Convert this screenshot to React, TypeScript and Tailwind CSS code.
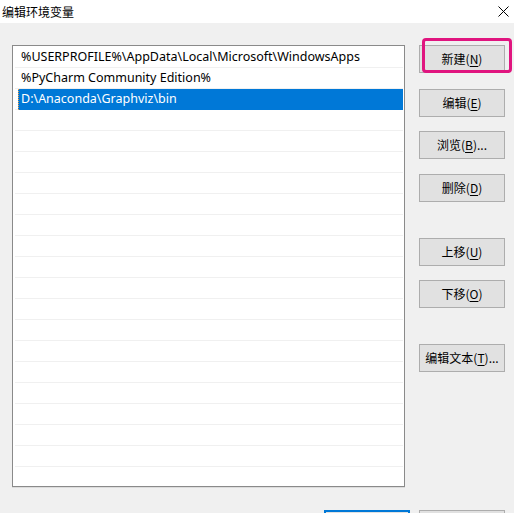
import React from "react";

const FONT = '"Segoe UI", "Noto Sans", "Noto Sans CJK SC", sans-serif';

function Btn({ label, u, suffix = "", className = "" }: { label: string; u: string; suffix?: string; className?: string }) {
  return (
    <div
      className={`w-[86px] h-[28px] bg-[#e1e1e1] border border-[#adadad] flex items-center justify-center text-[12px] text-black ${className}`}
    >
      <span>
        {label}(<span className="underline underline-offset-[2px]">{u}</span>){suffix}
      </span>
    </div>
  );
}

export default function App() {
  const items = [
    "%USERPROFILE%\\AppData\\Local\\Microsoft\\WindowsApps",
    "%PyCharm Community Edition%",
    "D:\\Anaconda\\Graphviz\\bin",
  ];
  const rows = Array.from({ length: 21 }, (_, i) => items[i] ?? "");
  return (
    <div className="w-[514px] h-[513px] bg-[#f0f0f0] overflow-hidden flex flex-col" style={{ fontFamily: FONT }}>
      <div className="h-[23px] bg-white flex items-center justify-between pl-[2px] pr-[5px] shrink-0">
        <span className="text-[12px] text-black leading-none" style={{ fontFamily: '"Noto Sans CJK SC", sans-serif' }}>
          编辑环境变量
        </span>
        <svg width="11" height="11" viewBox="0 0 11 11" className="mb-[1px]">
          <path d="M0.5 0.5 L10.5 10.5 M10.5 0.5 L0.5 10.5" stroke="#000" strokeWidth="1" />
        </svg>
      </div>
      <div className="flex pt-[22px] pl-[12px] shrink-0">
        <div className="w-[393px] h-[442px] bg-white border border-[#8a8a8a] shadow-[0_1px_0_#dcdcdc] pt-[1px] px-[1px] overflow-hidden">
          {rows.map((t, i) => (
            <div key={i} className="h-[21px] border-b border-[#f0f0f0] flex ml-[1px]">
              {i === 2 ? (
                <div className="ml-[3px] flex-1 h-[21px] bg-[#0078d7] text-white text-[12.5px] flex items-center pl-[2px] border-l border-dotted border-[#f7a046]">
                  {t}
                </div>
              ) : (
                <div className="pl-[6px] text-[12.5px] text-black flex items-center">{t}</div>
              )}
            </div>
          ))}
        </div>
        <div className="ml-[14px] flex flex-col" style={{ fontFamily: '"Noto Sans CJK SC", "Noto Sans", sans-serif' }}>
          <div className="relative">
            <Btn label="新建" u="N" />
            <div className="absolute left-[3px] top-[-7px] w-[90px] h-[35px] border-[3px] border-[#e0157f] rounded-[4px]" />
          </div>
          <Btn label="编辑" u="E" className="mt-[16px]" />
          <Btn label="浏览" u="B" suffix="..." className="mt-[14px]" />
          <Btn label="删除" u="D" className="mt-[15px]" />
          <Btn label="上移" u="U" className="mt-[36px]" />
          <Btn label="下移" u="O" className="mt-[14px]" />
          <Btn label="编辑文本" u="T" suffix="..." className="mt-[36px]" />
        </div>
      </div>
      <div className="flex pl-[324px] gap-[9px] mt-[23px] shrink-0">
        <div className="w-[86px] h-[28px] bg-[#e1e1e1] border-2 border-[#0078d7]" />
        <div className="w-[86px] h-[28px] bg-[#e1e1e1] border border-[#adadad]" />
      </div>
    </div>
  );
}
